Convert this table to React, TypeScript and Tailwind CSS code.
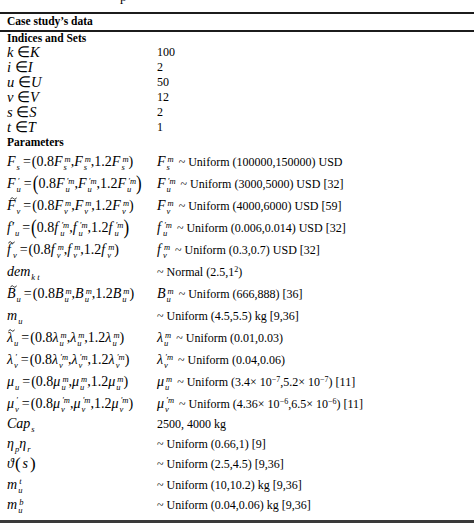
import React from "react";

type SP = { b: React.ReactNode; sub?: React.ReactNode; sup?: React.ReactNode; gap?: string };

function S({ b, sub, sup, gap = "ml-[1px]" }: SP) {
  return (
    <span className="inline-flex items-center">
      <span className="italic">{b}</span>
      <span className={`inline-flex flex-col italic text-[8.5px] leading-[8.5px] translate-y-[1px] ${gap}`}>
        <span className="h-[8.5px] whitespace-nowrap pl-[1px]">{sup ?? ""}</span>
        <span className="h-[8.5px] whitespace-nowrap">{sub ?? ""}</span>
      </span>
    </span>
  );
}

function Tl({ c, left = "left-[3px]" }: { c: string; left?: string }) {
  return (
    <span className="relative inline-block italic">
      {c}
      <svg
        className={`absolute ${left} top-[-1px] w-[7px] h-[3px]`}
        viewBox="0 0 7 3"
        fill="none"
        stroke="black"
        strokeWidth="0.8"
      >
        <path d="M0.4 2.4 C1.4 0.4 2.6 0.4 3.5 1.5 C4.4 2.6 5.6 2.6 6.6 0.6" />
      </svg>
    </span>
  );
}

function Paren({ c, big }: { c: string; big?: boolean }) {
  if (big)
    return <span className="inline-block text-[17px] leading-[16px] scale-y-[1.25] -translate-y-[0.5px]">{c}</span>;
  return <span>{c}</span>;
}

function Tri({ lhs, x, big }: { lhs: React.ReactNode; x: React.ReactNode; big?: boolean }) {
  return (
    <span className="inline-flex items-center whitespace-nowrap">
      {lhs}
      <span className="ml-[3px] mr-[1px]">=</span>
      <Paren c="(" big={big} />
      <span>0.8</span>
      {x}
      <span>,</span>
      {x}
      <span>,</span>
      <span>1.2</span>
      {x}
      <Paren c=")" big={big} />
    </span>
  );
}

function Dist({ x, children }: { x?: React.ReactNode; children: React.ReactNode }) {
  return (
    <span className="inline-flex items-center whitespace-nowrap">
      {x && <span className="mr-[5px] inline-flex items-center">{x}</span>}
      <span className="text-[12px] leading-[16px]">{children}</span>
    </span>
  );
}

const Exp = ({ children }: { children: React.ReactNode }) => (
  <sup className="text-[8px]">{children}</sup>
);

function IdxRow({ l, r }: { l: React.ReactNode; r: string }) {
  return (
    <div className="grid grid-cols-[150px_1fr] items-center h-[15px] pl-[7px]">
      <div className="text-[14.5px] leading-[15px] whitespace-nowrap">{l}</div>
      <div className="text-[12px] leading-[15px]">{r}</div>
    </div>
  );
}

function PRow({ l, r, h = "h-[22px]" }: { l: React.ReactNode; r: React.ReactNode; h?: string }) {
  return (
    <div className={`grid grid-cols-[150px_1fr] items-center pl-[7px] ${h}`}>
      <div className="text-[14px] leading-[16px] flex items-center">{l}</div>
      <div className="text-[14px] leading-[16px] flex items-center">{r}</div>
    </div>
  );
}

export default function App() {
  const Fsm = <S b="F" sub="s" sup="m" />;
  const Fum = <S b="F" sub="u" sup="′m" />;
  const Fvm = <S b="F" sub="v" sup="m" />;
  const fum = <S b="f" sub="u" sup="′m" gap="ml-[2px]" />;
  const fvm = <S b="f" sub="v" sup="m" gap="ml-[2px]" />;
  const Bum = <S b="B" sub="u" sup="m" />;
  const lum = <S b="λ" sub="u" sup="m" />;
  const lvm = <S b="λ" sub="v" sup="′m" />;
  const mum = <S b="μ" sub="u" sup="m" />;
  const mvm = <S b="μ" sub="v" sup="′m" />;

  return (
    <div className="w-[474px] h-[526px] bg-white overflow-hidden text-black font-['Liberation_Serif',serif]">
      <div className="h-[12px] overflow-hidden">
        <div className="pl-[120px] -mt-[10px] text-[13px] leading-[14px]">p</div>
      </div>
      <div className="h-[2px] bg-[#1c1c1c]" />
      <div className="h-[16px] flex items-center px-[7px] font-bold text-[11.5px]">Case study’s data</div>
      <div className="h-[2px] bg-[#1c1c1c]" />
      <div className="h-[13px] flex items-center px-[7px] font-bold text-[11.5px]">Indices and Sets</div>

      <IdxRow l={<><i>k</i> ∈<i>K</i></>} r="100" />
      <IdxRow l={<><i>i</i> ∈<i>I</i></>} r="2" />
      <IdxRow l={<><i>u</i> ∈<i>U</i></>} r="50" />
      <IdxRow l={<><i>v</i> ∈<i>V</i></>} r="12" />
      <IdxRow l={<><i>s</i> ∈<i>S</i></>} r="2" />
      <IdxRow l={<><i>t</i> ∈<i>T</i></>} r="1" />

      <div className="h-[16px] flex items-center px-[7px] font-bold text-[11.5px]">Parameters</div>

      <PRow
        l={<Tri lhs={<S b="F" sub="s" />} x={Fsm} />}
        r={<Dist x={Fsm}>~ Uniform (100000,150000) USD</Dist>}
      />
      <PRow
        l={<Tri lhs={<S b="F" sub="u" sup="′" />} x={Fum} big />}
        r={<Dist x={Fum}>~ Uniform (3000,5000) USD [32]</Dist>}
      />
      <PRow
        l={<Tri lhs={<S b={<Tl c="F" />} sub="v" />} x={Fvm} />}
        r={<Dist x={Fvm}>~ Uniform (4000,6000) USD [59]</Dist>}
      />
      <PRow
        l={<Tri lhs={<><span className="italic">f</span><S b=" ′" sub="u" gap="ml-[1px]" /></>} x={fum} big />}
        r={<Dist x={fum}>~ Uniform (0.006,0.014) USD [32]</Dist>}
      />
      <PRow
        l={<Tri lhs={<S b={<Tl c="f" left="left-[1px]" />} sub="v" gap="ml-[2px]" />} x={fvm} />}
        r={<Dist x={fvm}>~ Uniform (0.3,0.7) USD [32]</Dist>}
      />
      <PRow
        l={<S b="dem" sub="k t" />}
        r={<Dist>~ Normal (2.5,1<Exp>2</Exp>)</Dist>}
      />
      <PRow
        l={<Tri lhs={<S b={<Tl c="B" />} sub="u" />} x={Bum} />}
        r={<Dist x={Bum}>~ Uniform (666,888) [36]</Dist>}
      />
      <PRow l={<S b="m" sub="u" />} r={<Dist>~ Uniform (4.5,5.5) kg [9,36]</Dist>} />
      <PRow
        l={<Tri lhs={<S b={<Tl c="λ" left="left-[1px]" />} sub="u" />} x={lum} />}
        r={<Dist x={lum}>~ Uniform (0.01,0.03)</Dist>}
      />
      <PRow
        l={<Tri lhs={<S b="λ" sub="v" sup="′" />} x={lvm} />}
        r={<Dist x={lvm}>~ Uniform (0.04,0.06)</Dist>}
      />
      <PRow
        l={<Tri lhs={<S b="μ" sub="u" />} x={mum} />}
        r={
          <Dist x={mum}>
            ~ Uniform (3.4× 10<Exp>−7</Exp>,5.2× 10<Exp>−7</Exp>) [11]
          </Dist>
        }
      />
      <PRow
        h="h-[21px]"
        l={<Tri lhs={<S b="μ" sub="v" sup="′" />} x={mvm} />}
        r={
          <Dist x={mvm}>
            ~ Uniform (4.36× 10<Exp>−6</Exp>,6.5× 10<Exp>−6</Exp>) [11]
          </Dist>
        }
      />
      <PRow h="h-[20px]" l={<S b="Cap" sub="s" />} r={<Dist>2500, 4000 kg</Dist>} />
      <PRow
        h="h-[20px]"
        l={<><S b="η" sub="p" /><S b="η" sub="r" /></>}
        r={<Dist>~ Uniform (0.66,1) [9]</Dist>}
      />
      <PRow
        h="h-[20px]"
        l={
          <span className="inline-flex items-center">
            <span className="italic">ϑ</span>
            <span className="text-[17px] ml-[1px]">(</span>
            <span className="italic mx-[2px]">s</span>
            <span className="text-[17px]">)</span>
          </span>
        }
        r={<Dist>~ Uniform (2.5,4.5) [9,36]</Dist>}
      />
      <PRow h="h-[21px]" l={<S b="m" sub="u" sup="t" />} r={<Dist>~ Uniform (10,10.2) kg [9,36]</Dist>} />
      <PRow h="h-[20px]" l={<S b="m" sub="u" sup="b" />} r={<Dist>~ Uniform (0.04,0.06) kg [9,36]</Dist>} />
      <div className="h-[5px]" />
      <div className="h-[3px] bg-[#3a3a3a]" />
    </div>
  );
}
